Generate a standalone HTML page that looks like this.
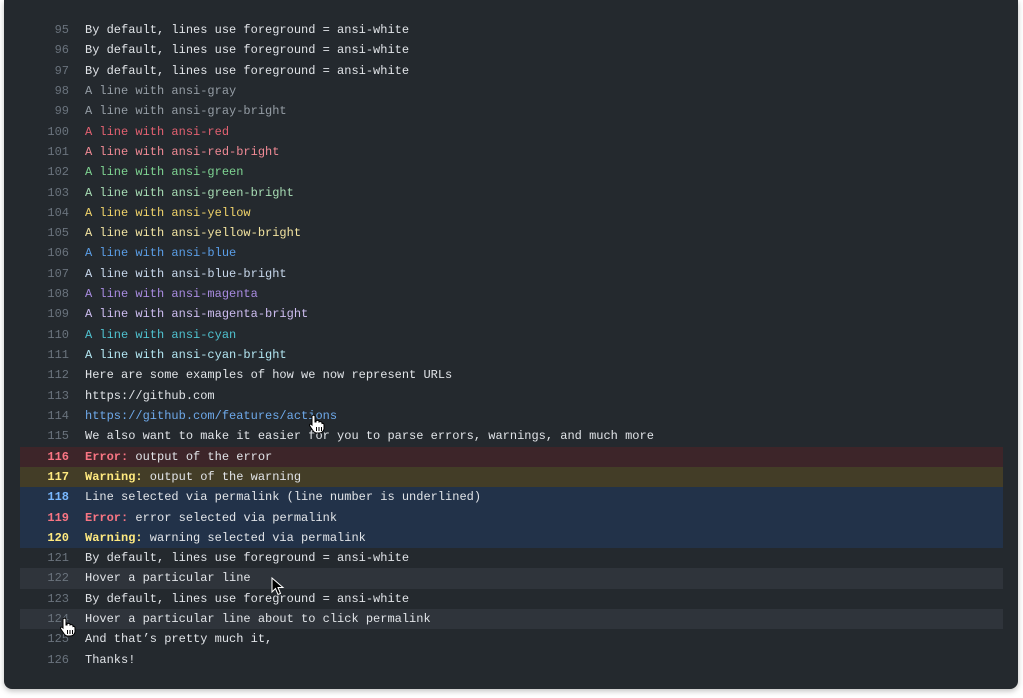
<!DOCTYPE html>
<html><head><meta charset="utf-8"><style>
html,body{margin:0;padding:0;background:#fff;width:1023px;height:698px;overflow:hidden}
.panel{position:absolute;left:4px;top:0;width:1014px;height:689px;background:#24292e;border-radius:0 0 8px 8px;box-shadow:0 2px 6px rgba(0,0,0,.25)}
.lines{position:absolute;left:16px;top:20px;width:983px;font-family:"Liberation Mono",monospace;font-size:12px;color:#e1e4e8}
.r{height:20.32px;line-height:21.5px;white-space:pre;position:relative}
.n{display:inline-block;width:49px;text-align:right;color:#6a737d;margin-right:16px}
.e{background:#3d2529}.w{background:#433d27}.s{background:#223249}.h{background:#2f343b}
.e .n,.ee{color:#f97583}.w .n,.ww{color:#ffea7f}
.s .n{color:#79b8ff}
b{font-weight:bold}
</style></head><body>
<div class="panel">
<div class="lines">
<div class="r"><span class="n">95</span>By default, lines use foreground = ansi-white</div>
<div class="r"><span class="n">96</span>By default, lines use foreground = ansi-white</div>
<div class="r"><span class="n">97</span>By default, lines use foreground = ansi-white</div>
<div class="r" style="color:#959da5"><span class="n">98</span>A line with ansi-gray</div>
<div class="r" style="color:#959da5"><span class="n">99</span>A line with ansi-gray-bright</div>
<div class="r" style="color:#e36171"><span class="n">100</span>A line with ansi-red</div>
<div class="r" style="color:#f08a95"><span class="n">101</span>A line with ansi-red-bright</div>
<div class="r" style="color:#7ed492"><span class="n">102</span>A line with ansi-green</div>
<div class="r" style="color:#a7dcb4"><span class="n">103</span>A line with ansi-green-bright</div>
<div class="r" style="color:#f0d36a"><span class="n">104</span>A line with ansi-yellow</div>
<div class="r" style="color:#f2e3a0"><span class="n">105</span>A line with ansi-yellow-bright</div>
<div class="r" style="color:#5a9ee8"><span class="n">106</span>A line with ansi-blue</div>
<div class="r" style="color:#c8d8ec"><span class="n">107</span>A line with ansi-blue-bright</div>
<div class="r" style="color:#a88be0"><span class="n">108</span>A line with ansi-magenta</div>
<div class="r" style="color:#cdbdf0"><span class="n">109</span>A line with ansi-magenta-bright</div>
<div class="r" style="color:#4fc1cf"><span class="n">110</span>A line with ansi-cyan</div>
<div class="r" style="color:#b3e6f2"><span class="n">111</span>A line with ansi-cyan-bright</div>
<div class="r"><span class="n">112</span>Here are some examples of how we now represent URLs</div>
<div class="r"><span class="n">113</span>https://github.com</div>
<div class="r" style="color:#6ea9ea"><span class="n">114</span>https://github.com/features/actions</div>
<div class="r"><span class="n">115</span>We also want to make it easier for you to parse errors, warnings, and much more</div>
<div class="r e"><span class="n"><b>116</b></span><b class="ee">Error:</b> output of the error</div>
<div class="r w"><span class="n"><b>117</b></span><b class="ww">Warning:</b> output of the warning</div>
<div class="r s"><span class="n"><b>118</b></span>Line selected via permalink (line number is underlined)</div>
<div class="r s"><span class="n" style="color:#f97583"><b>119</b></span><b class="ee">Error:</b> error selected via permalink</div>
<div class="r s"><span class="n" style="color:#ffea7f"><b>120</b></span><b class="ww">Warning:</b> warning selected via permalink</div>
<div class="r"><span class="n">121</span>By default, lines use foreground = ansi-white</div>
<div class="r h"><span class="n">122</span>Hover a particular line</div>
<div class="r"><span class="n">123</span>By default, lines use foreground = ansi-white</div>
<div class="r h"><span class="n">124</span>Hover a particular line about to click permalink</div>
<div class="r"><span class="n">125</span>And that’s pretty much it,</div>
<div class="r"><span class="n">126</span>Thanks!</div>
</div>
</div>
<svg style="position:absolute;left:271px;top:577px" width="14" height="20" viewBox="0 0 14 20"><path d="M1 1 L1 15 L4.5 11.5 L7 17.5 L9.5 16.5 L7 10.5 L12 10.5 Z" fill="#000" stroke="#fff" stroke-width="1"/></svg>
<svg style="position:absolute;left:59px;top:617px" width="18" height="20" viewBox="0 0 18 20"><path d="M4 2 Q5.5 0.5 7 2 L7 8 L8 8 L8 7 Q9.5 5.8 11 7 L11 8 Q12.5 7 14 8.5 L14 9.5 Q15.5 9 16 10.5 L16 15 Q15 19 11 19 L8 19 Q6 18.5 4.5 16 L1.5 11.5 Q1.5 9.5 3.5 10.5 L4 11 Z" fill="#fff" stroke="#000" stroke-width="1"/><path d="M8.5 13v4M11 13v4M13.5 13v4" stroke="#000" stroke-width="1"/></svg>
<svg style="position:absolute;left:308px;top:414px" width="18" height="20" viewBox="0 0 18 20"><path d="M4 2 Q5.5 0.5 7 2 L7 8 L8 8 L8 7 Q9.5 5.8 11 7 L11 8 Q12.5 7 14 8.5 L14 9.5 Q15.5 9 16 10.5 L16 15 Q15 19 11 19 L8 19 Q6 18.5 4.5 16 L1.5 11.5 Q1.5 9.5 3.5 10.5 L4 11 Z" fill="#fff" stroke="#000" stroke-width="1"/><path d="M8.5 13v4M11 13v4M13.5 13v4" stroke="#000" stroke-width="1"/></svg>
</body></html>
